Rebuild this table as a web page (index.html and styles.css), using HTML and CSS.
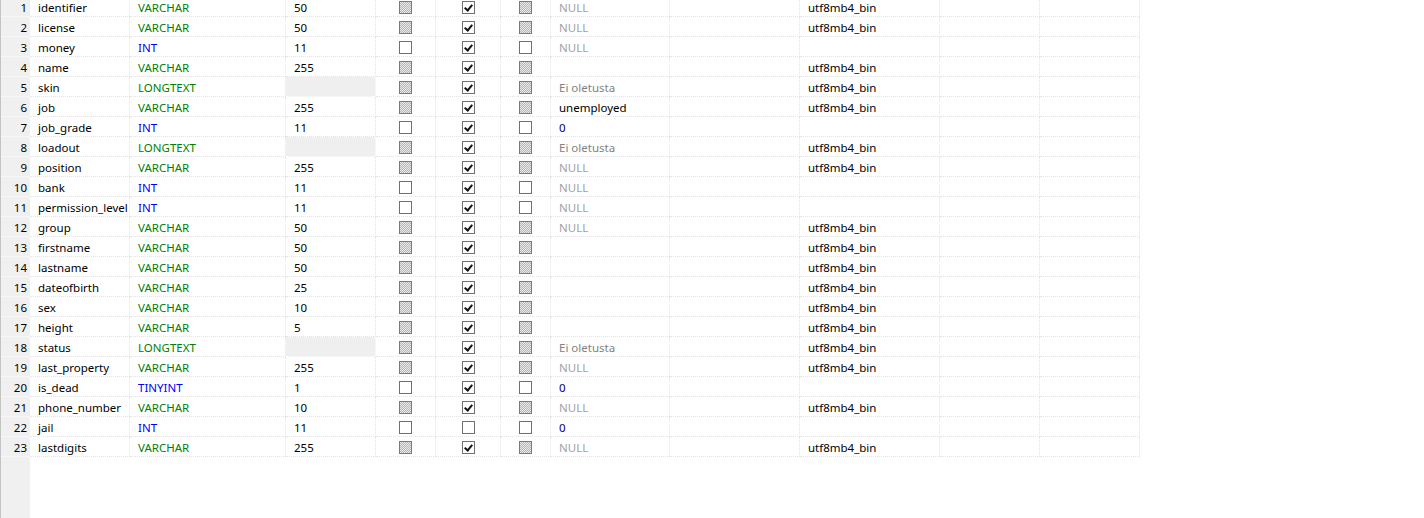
FILE: index.html
```html
<!DOCTYPE html>
<html lang="fi">
<head>
<meta charset="utf-8">
<title>Sarakkeet</title>
<link rel="stylesheet" href="styles.css">
</head>
<body>
<div class="editor">
  <div class="gutter">
    <div class="num">1</div><div class="num">2</div><div class="num">3</div><div class="num">4</div>
    <div class="num">5</div><div class="num">6</div><div class="num">7</div><div class="num">8</div>
    <div class="num">9</div><div class="num">10</div><div class="num">11</div><div class="num">12</div>
    <div class="num">13</div><div class="num">14</div><div class="num">15</div><div class="num">16</div>
    <div class="num">17</div><div class="num">18</div><div class="num">19</div><div class="num">20</div>
    <div class="num">21</div><div class="num">22</div><div class="num">23</div>
  </div>
  <div class="grid">
    <div class="row"><div class="c">identifier</div><div class="c t-str">VARCHAR</div><div class="c">50</div><div class="c box"><span class="cb dis"></span></div><div class="c box"><span class="cb chk"></span></div><div class="c box"><span class="cb dis"></span></div><div class="c d-null">NULL</div><div class="c"></div><div class="c">utf8mb4_bin</div><div class="c"></div><div class="c"></div></div>
    <div class="row"><div class="c">license</div><div class="c t-str">VARCHAR</div><div class="c">50</div><div class="c box"><span class="cb dis"></span></div><div class="c box"><span class="cb chk"></span></div><div class="c box"><span class="cb dis"></span></div><div class="c d-null">NULL</div><div class="c"></div><div class="c">utf8mb4_bin</div><div class="c"></div><div class="c"></div></div>
    <div class="row"><div class="c">money</div><div class="c t-int">INT</div><div class="c">11</div><div class="c box"><span class="cb"></span></div><div class="c box"><span class="cb chk"></span></div><div class="c box"><span class="cb"></span></div><div class="c d-null">NULL</div><div class="c"></div><div class="c"></div><div class="c"></div><div class="c"></div></div>
    <div class="row"><div class="c">name</div><div class="c t-str">VARCHAR</div><div class="c">255</div><div class="c box"><span class="cb dis"></span></div><div class="c box"><span class="cb chk"></span></div><div class="c box"><span class="cb dis"></span></div><div class="c"></div><div class="c"></div><div class="c">utf8mb4_bin</div><div class="c"></div><div class="c"></div></div>
    <div class="row"><div class="c">skin</div><div class="c t-str">LONGTEXT</div><div class="c na"></div><div class="c box"><span class="cb dis"></span></div><div class="c box"><span class="cb chk"></span></div><div class="c box"><span class="cb dis"></span></div><div class="c d-none">Ei oletusta</div><div class="c"></div><div class="c">utf8mb4_bin</div><div class="c"></div><div class="c"></div></div>
    <div class="row"><div class="c">job</div><div class="c t-str">VARCHAR</div><div class="c">255</div><div class="c box"><span class="cb dis"></span></div><div class="c box"><span class="cb chk"></span></div><div class="c box"><span class="cb dis"></span></div><div class="c">unemployed</div><div class="c"></div><div class="c">utf8mb4_bin</div><div class="c"></div><div class="c"></div></div>
    <div class="row"><div class="c">job_grade</div><div class="c t-int">INT</div><div class="c">11</div><div class="c box"><span class="cb"></span></div><div class="c box"><span class="cb chk"></span></div><div class="c box"><span class="cb"></span></div><div class="c d-num">0</div><div class="c"></div><div class="c"></div><div class="c"></div><div class="c"></div></div>
    <div class="row"><div class="c">loadout</div><div class="c t-str">LONGTEXT</div><div class="c na"></div><div class="c box"><span class="cb dis"></span></div><div class="c box"><span class="cb chk"></span></div><div class="c box"><span class="cb dis"></span></div><div class="c d-none">Ei oletusta</div><div class="c"></div><div class="c">utf8mb4_bin</div><div class="c"></div><div class="c"></div></div>
    <div class="row"><div class="c">position</div><div class="c t-str">VARCHAR</div><div class="c">255</div><div class="c box"><span class="cb dis"></span></div><div class="c box"><span class="cb chk"></span></div><div class="c box"><span class="cb dis"></span></div><div class="c d-null">NULL</div><div class="c"></div><div class="c">utf8mb4_bin</div><div class="c"></div><div class="c"></div></div>
    <div class="row"><div class="c">bank</div><div class="c t-int">INT</div><div class="c">11</div><div class="c box"><span class="cb"></span></div><div class="c box"><span class="cb chk"></span></div><div class="c box"><span class="cb"></span></div><div class="c d-null">NULL</div><div class="c"></div><div class="c"></div><div class="c"></div><div class="c"></div></div>
    <div class="row"><div class="c">permission_level</div><div class="c t-int">INT</div><div class="c">11</div><div class="c box"><span class="cb"></span></div><div class="c box"><span class="cb chk"></span></div><div class="c box"><span class="cb"></span></div><div class="c d-null">NULL</div><div class="c"></div><div class="c"></div><div class="c"></div><div class="c"></div></div>
    <div class="row"><div class="c">group</div><div class="c t-str">VARCHAR</div><div class="c">50</div><div class="c box"><span class="cb dis"></span></div><div class="c box"><span class="cb chk"></span></div><div class="c box"><span class="cb dis"></span></div><div class="c d-null">NULL</div><div class="c"></div><div class="c">utf8mb4_bin</div><div class="c"></div><div class="c"></div></div>
    <div class="row"><div class="c">firstname</div><div class="c t-str">VARCHAR</div><div class="c">50</div><div class="c box"><span class="cb dis"></span></div><div class="c box"><span class="cb chk"></span></div><div class="c box"><span class="cb dis"></span></div><div class="c"></div><div class="c"></div><div class="c">utf8mb4_bin</div><div class="c"></div><div class="c"></div></div>
    <div class="row"><div class="c">lastname</div><div class="c t-str">VARCHAR</div><div class="c">50</div><div class="c box"><span class="cb dis"></span></div><div class="c box"><span class="cb chk"></span></div><div class="c box"><span class="cb dis"></span></div><div class="c"></div><div class="c"></div><div class="c">utf8mb4_bin</div><div class="c"></div><div class="c"></div></div>
    <div class="row"><div class="c">dateofbirth</div><div class="c t-str">VARCHAR</div><div class="c">25</div><div class="c box"><span class="cb dis"></span></div><div class="c box"><span class="cb chk"></span></div><div class="c box"><span class="cb dis"></span></div><div class="c"></div><div class="c"></div><div class="c">utf8mb4_bin</div><div class="c"></div><div class="c"></div></div>
    <div class="row"><div class="c">sex</div><div class="c t-str">VARCHAR</div><div class="c">10</div><div class="c box"><span class="cb dis"></span></div><div class="c box"><span class="cb chk"></span></div><div class="c box"><span class="cb dis"></span></div><div class="c"></div><div class="c"></div><div class="c">utf8mb4_bin</div><div class="c"></div><div class="c"></div></div>
    <div class="row"><div class="c">height</div><div class="c t-str">VARCHAR</div><div class="c">5</div><div class="c box"><span class="cb dis"></span></div><div class="c box"><span class="cb chk"></span></div><div class="c box"><span class="cb dis"></span></div><div class="c"></div><div class="c"></div><div class="c">utf8mb4_bin</div><div class="c"></div><div class="c"></div></div>
    <div class="row"><div class="c">status</div><div class="c t-str">LONGTEXT</div><div class="c na"></div><div class="c box"><span class="cb dis"></span></div><div class="c box"><span class="cb chk"></span></div><div class="c box"><span class="cb dis"></span></div><div class="c d-none">Ei oletusta</div><div class="c"></div><div class="c">utf8mb4_bin</div><div class="c"></div><div class="c"></div></div>
    <div class="row"><div class="c">last_property</div><div class="c t-str">VARCHAR</div><div class="c">255</div><div class="c box"><span class="cb dis"></span></div><div class="c box"><span class="cb chk"></span></div><div class="c box"><span class="cb dis"></span></div><div class="c d-null">NULL</div><div class="c"></div><div class="c">utf8mb4_bin</div><div class="c"></div><div class="c"></div></div>
    <div class="row"><div class="c">is_dead</div><div class="c t-int">TINYINT</div><div class="c">1</div><div class="c box"><span class="cb"></span></div><div class="c box"><span class="cb chk"></span></div><div class="c box"><span class="cb"></span></div><div class="c d-num">0</div><div class="c"></div><div class="c"></div><div class="c"></div><div class="c"></div></div>
    <div class="row"><div class="c">phone_number</div><div class="c t-str">VARCHAR</div><div class="c">10</div><div class="c box"><span class="cb dis"></span></div><div class="c box"><span class="cb chk"></span></div><div class="c box"><span class="cb dis"></span></div><div class="c d-null">NULL</div><div class="c"></div><div class="c">utf8mb4_bin</div><div class="c"></div><div class="c"></div></div>
    <div class="row"><div class="c">jail</div><div class="c t-int">INT</div><div class="c">11</div><div class="c box"><span class="cb"></span></div><div class="c box"><span class="cb"></span></div><div class="c box"><span class="cb"></span></div><div class="c d-num">0</div><div class="c"></div><div class="c"></div><div class="c"></div><div class="c"></div></div>
    <div class="row"><div class="c">lastdigits</div><div class="c t-str">VARCHAR</div><div class="c">255</div><div class="c box"><span class="cb dis"></span></div><div class="c box"><span class="cb chk"></span></div><div class="c box"><span class="cb dis"></span></div><div class="c d-null">NULL</div><div class="c"></div><div class="c">utf8mb4_bin</div><div class="c"></div><div class="c"></div></div>
  </div>
</div>
</body>
</html>
```
FILE: styles.css
```css
* { box-sizing: border-box; }
html, body {
  margin: 0;
  height: 100%;
  background: #fff;
  overflow: hidden;
}
body {
  font-family: "Noto Sans", "Open Sans", sans-serif;
  font-size: 11.5px;
  color: #000;
}
.editor {
  display: flex;
  height: 100%;
}
.gutter {
  width: 30px;
  flex: none;
  background: #f0f0f0;
  border-left: 1px solid #c4c4c4;
}
.gutter .num:first-child,
.grid .row:first-child { margin-top: -3px; }
.num {
  height: 20px;
  line-height: 21px;
  text-align: right;
  padding-right: 3px;
  border-bottom: 1px dotted #ffffff;
}
.grid {
  display: flex;
  flex-direction: column;
}
.row {
  display: grid;
  grid-template-columns: 100px 156px 90px 60px 65px 50px 119px 130px 140px 100px 100px;
  height: 20px;
}
.c {
  height: 20px;
  line-height: 21px;
  padding-left: 8px;
  white-space: nowrap;
  overflow: hidden;
  border-right: 1px dotted #e4e4e4;
  border-bottom: 1px dotted #e4e4e4;
}
.c.na {
  background: #efefef;
  border-right-color: #fff;
  border-bottom-color: #fff;
}
.c.box {
  padding: 4px 0 0;
  display: flex;
  align-items: flex-start;
  justify-content: center;
}
.t-str { color: #008000; }
.t-int { color: #0000ff; }
.d-null { color: #a09fa6; }
.d-none { color: #828282; }
.d-num { color: #000080; }
.cb {
  position: relative;
  width: 13px;
  height: 13px;
  border: 1px solid #707070;
  background: #fff;
}
.cb.dis {
  border-color: #7a7a7a;
  background: repeating-conic-gradient(#b4b4b4 0 25%, #ececec 0 50%) 0 0 / 2px 2px;
}
.cb.chk::after {
  content: "";
  position: absolute;
  left: 3.5px;
  top: 1px;
  width: 3px;
  height: 6px;
  border-right: 2px solid #111;
  border-bottom: 2px solid #111;
  transform: rotate(40deg);
}
```
